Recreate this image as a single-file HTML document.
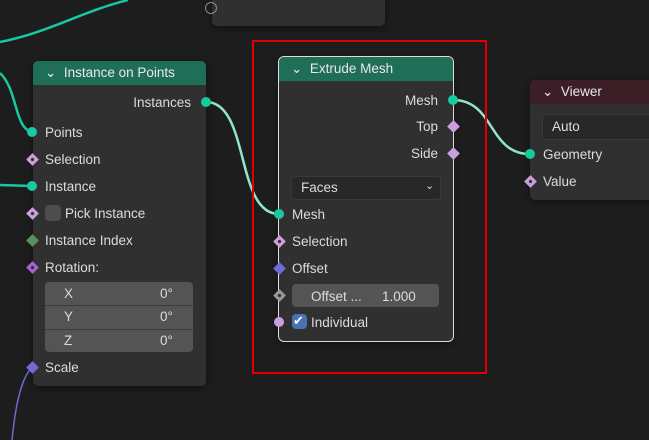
<!DOCTYPE html>
<html><head><style>
body{margin:0;width:649px;height:440px;background:#1d1d1d;position:relative;overflow:hidden;font-family:"Liberation Sans",sans-serif;font-size:13.5px;color:#dcdcdc}
.n{position:absolute;background:#303030;border-radius:5px;box-shadow:0 2px 8px rgba(0,0,0,.45)}
.h{position:absolute;left:0;right:0;top:0;height:24px;border-radius:5px 5px 0 0;background:#1f6e58;color:#e8e8e8;line-height:24px;padding-left:12px;box-sizing:border-box}
.t{position:absolute;white-space:nowrap;line-height:16px;margin-top:1px}
.s{position:absolute;width:10px;height:10px;border-radius:50%;background:#17c8a0;margin:-5px 0 0 -5px}
.d{position:absolute;width:9px;height:9px;transform:rotate(45deg);margin:-4.5px 0 0 -4.5px;box-sizing:border-box}
.dd{background:radial-gradient(#303030 22%,#c9a0dc 30%)}
.box{position:absolute;background:#545454;border-radius:4px}
</style></head><body>
<svg width="649" height="440" style="position:absolute;left:0;top:0">
<path d="M0 42 C50 32 80 12 128 0" stroke="#17c8a0" stroke-width="2.5" fill="none"/>
<path d="M0 73 C18 90 14 128 32 132" stroke="#17c8a0" stroke-width="2.5" fill="none"/>
<path d="M0 185 L32 186" stroke="#17c8a0" stroke-width="2.5" fill="none"/>
<path d="M206 102 C250 102 235 214 279 214" stroke="#8fe6cc" stroke-width="2.5" fill="none"/>
<path d="M453 100 C495 100 488 154 530 154" stroke="#8fe6cc" stroke-width="2.5" fill="none"/>
<path d="M32 367 C20 380 15 410 12 440" stroke="#6d6bd6" stroke-width="1.5" fill="none"/>
</svg>
<div class="n" style="left:212px;top:-6px;width:173px;height:32px"></div>
<div style="position:absolute;left:205px;top:2px;width:10px;height:10px;border:1.5px solid #8a8a8a;border-radius:50%"></div>

<div class="n" style="left:33px;top:61px;width:173px;height:325px">
<div class="h">⌄&nbsp; Instance on Points</div>
<div class="t" style="right:15px;top:33px">Instances</div>
<div class="t" style="left:12px;top:63px">Points</div>
<div class="t" style="left:12px;top:90px">Selection</div>
<div class="t" style="left:12px;top:117px">Instance</div>
<div class="box" style="left:12px;top:144px;width:16px;height:16px;background:#4d4d4d"></div>
<div class="t" style="left:32px;top:144px">Pick Instance</div>
<div class="t" style="left:12px;top:171px">Instance Index</div>
<div class="t" style="left:12px;top:198px">Rotation:</div>
<div class="box" style="left:12px;top:221px;width:148px;height:70px;background:#545454"></div>
<div style="position:absolute;left:12px;top:244px;width:148px;height:1px;background:#3c3c3c"></div>
<div style="position:absolute;left:12px;top:268px;width:148px;height:1px;background:#3c3c3c"></div>
<div class="t" style="left:31px;top:224px">X</div><div class="t" style="left:127px;top:224px">0°</div>
<div class="t" style="left:31px;top:247px">Y</div><div class="t" style="left:127px;top:247px">0°</div>
<div class="t" style="left:31px;top:271px">Z</div><div class="t" style="left:127px;top:271px">0°</div>
<div class="t" style="left:12px;top:298px">Scale</div>
</div>
<div class="s" style="left:206px;top:102px"></div>
<div class="s" style="left:32px;top:132px"></div>
<div class="d dd" style="left:32px;top:159px"></div>
<div class="s" style="left:32px;top:186px"></div>
<div class="d dd" style="left:32px;top:213px"></div>
<div class="d" style="left:32px;top:240px;background:#5a8f5f"></div>
<div class="d" style="left:32px;top:267px;background:radial-gradient(#303030 22%,#a95fd0 30%)"></div>
<div class="d" style="left:32px;top:367px;background:#6d6bd6"></div>

<div style="position:absolute;left:252px;top:40px;width:231px;height:330px;border:2px solid #e00000"></div>

<div class="n" style="left:279px;top:57px;width:174px;height:284px;outline:1px solid #ddd;outline-offset:0">
<div class="h">⌄&nbsp; Extrude Mesh</div>
<div class="t" style="right:15px;top:35px">Mesh</div>
<div class="t" style="right:15px;top:61px">Top</div>
<div class="t" style="right:15px;top:88px">Side</div>
<div class="box" style="left:12px;top:119px;width:148px;height:22px;background:#282828;border:1px solid #3a3a3a"></div>
<div class="t" style="left:22px;top:122px">Faces</div><div class="t" style="left:146px;top:120px;font-size:11px">⌄</div>
<div class="t" style="left:13px;top:149px">Mesh</div>
<div class="t" style="left:13px;top:176px">Selection</div>
<div class="t" style="left:13px;top:203px">Offset</div>
<div class="box" style="left:13px;top:227px;width:147px;height:23px"></div>
<div class="t" style="left:32px;top:231px">Offset ...</div><div class="t" style="left:103px;top:231px">1.000</div>
<div class="box" style="left:13px;top:257px;width:15px;height:15px;background:#4772b3"></div>
<div class="t" style="left:14px;top:255px;color:#fff;font-size:13px">✔</div>
<div class="t" style="left:32px;top:257px">Individual</div>
</div>
<div class="s" style="left:453px;top:100px"></div>
<div class="d" style="left:453px;top:126px;background:#c9a0dc"></div>
<div class="d" style="left:453px;top:153px;background:#c9a0dc"></div>
<div class="s" style="left:279px;top:214px"></div>
<div class="d dd" style="left:279px;top:241px"></div>
<div class="d" style="left:279px;top:268px;background:#6d6bd6"></div>
<div class="d" style="left:279px;top:295px;background:radial-gradient(#303030 22%,#999 30%)"></div>
<div class="s" style="left:279px;top:322px;background:#c9a0dc"></div>

<div class="n" style="left:530px;top:80px;width:130px;height:120px">
<div class="h" style="background:#3c1e26">⌄&nbsp; Viewer</div>
<div class="box" style="left:12px;top:34px;width:120px;height:24px;background:#282828;border:1px solid #3a3a3a"></div>
<div class="t" style="left:22px;top:38px">Auto</div>
<div class="t" style="left:13px;top:66px">Geometry</div>
<div class="t" style="left:13px;top:93px">Value</div>
</div>
<div class="s" style="left:530px;top:154px"></div>
<div class="d dd" style="left:530px;top:181px"></div>
</body></html>
